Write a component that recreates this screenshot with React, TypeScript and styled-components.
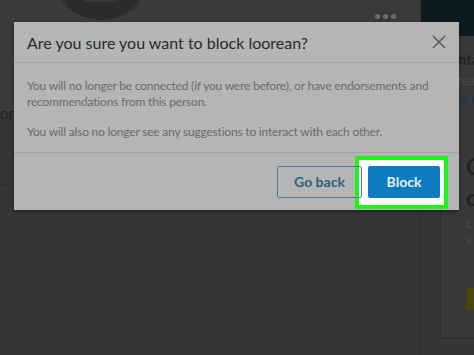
import React from "react";
import styled, { createGlobalStyle } from "styled-components";

const GlobalStyle = createGlobalStyle`
  html, body {
    margin: 0;
    padding: 0;
    width: 474px;
    height: 355px;
    overflow: hidden;
    background: #363636;
    font-family: Lato, "Liberation Sans", sans-serif;
  }
`;

const Page = styled.div`
  position: relative;
  width: 474px;
  height: 355px;
  display: grid;
  grid-template-columns: 421px 1fr;
  background: #363636;
`;

const MainColumn = styled.div`
  display: flex;
  flex-direction: column;
  border-right: 1px solid #2f2f2f;
`;

const ProfileCard = styled.div`
  height: 118px;
  background: #3a3a3a;
  display: flex;
  justify-content: space-between;
  padding: 0 22px 0 52px;
`;

const Avatar = styled.div`
  width: 98px;
  height: 98px;
  margin-top: -78px;
  border-radius: 50%;
  background: #2b2b2b;
  display: flex;
  justify-content: center;
  align-items: flex-end;
`;

const AvatarInner = styled.div`
  width: 36px;
  height: 3px;
  margin-bottom: 18px;
  border-radius: 0 0 4px 4px;
  background: #353535;
`;

const MoreDots = styled.div`
  color: #6a6a6a;
  font-size: 12px;
  font-weight: 700;
  letter-spacing: 1px;
  line-height: 1;
  padding-top: 10px;
`;

const SideLabel = styled.div`
  position: relative;
  color: #1e1e1e;
  font-size: 15px;
  margin-top: -14px;
`;

const MainRest = styled.div`
  flex: 1;
  margin-top: 62px;
  border-top: 1px solid #2f2f2f;
  background: #363636;
`;

const SideColumn = styled.div`
  display: flex;
  flex-direction: column;
  background: #363636;
`;

const SideHeader = styled.div`
  height: 36px;
  background: #0e1b1f;
`;

const SidePanel = styled.div`
  flex: 1;
  margin: 0 0 16px 19px;
  border-left: 1px solid #2f2f2f;
  border-bottom: 2px solid #2d2d2d;
  padding: 12px 0 0 17px;
  display: flex;
  flex-direction: column;
  background: #383838;
  overflow: hidden;
  white-space: nowrap;
`;

const SideText = styled.div<{ $tone: string; $size: number; $bold?: boolean; $top?: number; $indent?: number }>`
  color: ${(p) => p.$tone};
  font-size: ${(p) => p.$size}px;
  font-weight: ${(p) => (p.$bold ? 700 : 400)};
  margin-top: ${(p) => p.$top ?? 0}px;
  margin-left: ${(p) => p.$indent ?? 0}px;
  line-height: 1.3;
`;

const Badge = styled.div`
  margin: 40px 0 0 8px;
  width: 20px;
  height: 22px;
  border-radius: 3px;
  background: #4d4410;
`;

const Modal = styled.div`
  position: absolute;
  left: 14px;
  top: 22px;
  width: 445px;
  height: 188px;
  background: #b5b5b5;
  box-shadow: 0 2px 4px rgba(0, 0, 0, 0.35);
  display: flex;
  flex-direction: column;
`;

const ModalHeader = styled.div`
  height: 40px;
  display: flex;
  align-items: center;
  justify-content: space-between;
  padding: 0 13px 0 13px;
  border-bottom: 1px solid #a2a2a2;
`;

const Title = styled.h2`
  margin: 0;
  font-size: 16px;
  font-weight: 400;
  color: #2a2a2a;
`;

const CloseButton = styled.button`
  border: 0;
  background: none;
  padding: 0;
  width: 14px;
  height: 14px;
  display: flex;
  color: #5a5a5a;
`;

const ModalBody = styled.div`
  padding: 15px 13px 0;
  height: 90px;
  border-bottom: 1px solid #a2a2a2;
  box-sizing: border-box;
`;

const Paragraph = styled.p`
  margin: 0 0 14px;
  font-size: 12px;
  letter-spacing: -0.2px;
  line-height: 16px;
  color: #6b6b6b;
`;

const ModalFooter = styled.div`
  flex: 1;
  display: flex;
  align-items: center;
  justify-content: flex-end;
  gap: 6px;
  padding: 0 19px 0 0;
`;

const Button = styled.button<{ $primary?: boolean }>`
  height: 32px;
  width: ${(p) => (p.$primary ? 72 : 85)}px;
  padding: 0;
  font-family: Lato, "Liberation Sans", sans-serif;
  font-size: 14px;
  font-weight: 700;
  border-radius: 2px;
  border: 1px solid ${(p) => (p.$primary ? "#0e7cc0" : "#4e7c98")};
  background: ${(p) => (p.$primary ? "#0e7cc0" : "transparent")};
  color: ${(p) => (p.$primary ? "#e6eef4" : "#2d6182")};
  position: relative;
  z-index: 1;
`;

const Highlight = styled.div`
  position: relative;
  display: flex;

  &::before {
    content: "";
    position: absolute;
    left: -13px;
    right: -8px;
    top: -10px;
    bottom: -11px;
    border: 4px solid #21f21a;
    background: #ffffff;
  }
`;

export default function App() {
  return (
    <>
      <GlobalStyle />
      <Page>
        <MainColumn>
          <ProfileCard>
            <Avatar>
              <AvatarInner />
            </Avatar>
            <MoreDots>•••</MoreDots>
          </ProfileCard>
          <SideLabel>on</SideLabel>
          <MainRest />
        </MainColumn>
        <SideColumn>
          <SideHeader />
          <SidePanel>
            <SideText $tone="#252525" $size={15} $bold $top={2}>nta</SideText>
            <SideText $tone="#4a4a4a" $size={13} $top={2}>rea</SideText>
            <SideText $tone="#1d3a50" $size={13} $bold $top={2}>w r</SideText>
            <SideText $tone="#232323" $size={22} $bold $top={46} $indent={8}>C</SideText>
            <SideText $tone="#232323" $size={22} $bold $top={2} $indent={8}>c</SideText>
            <SideText $tone="#4a4a4a" $size={12} $top={4} $indent={8}>L</SideText>
            <SideText $tone="#4a4a4a" $size={12} $indent={8}>v</SideText>
            <Badge />
          </SidePanel>
        </SideColumn>

        <Modal role="dialog">
          <ModalHeader>
            <Title>Are you sure you want to block loorean?</Title>
            <CloseButton aria-label="Close">
              <svg width="14" height="14" viewBox="0 0 14 14" fill="none" stroke="currentColor" strokeWidth="1.5">
                <path d="M1 1 L13 13 M13 1 L1 13" />
              </svg>
            </CloseButton>
          </ModalHeader>
          <ModalBody>
            <Paragraph>
              You will no longer be connected (if you were before), or have endorsements and
              recommendations from this person.
            </Paragraph>
            <Paragraph>You will also no longer see any suggestions to interact with each other.</Paragraph>
          </ModalBody>
          <ModalFooter>
            <Button>Go back</Button>
            <Highlight>
              <Button $primary>Block</Button>
            </Highlight>
          </ModalFooter>
        </Modal>
      </Page>
    </>
  );
}
